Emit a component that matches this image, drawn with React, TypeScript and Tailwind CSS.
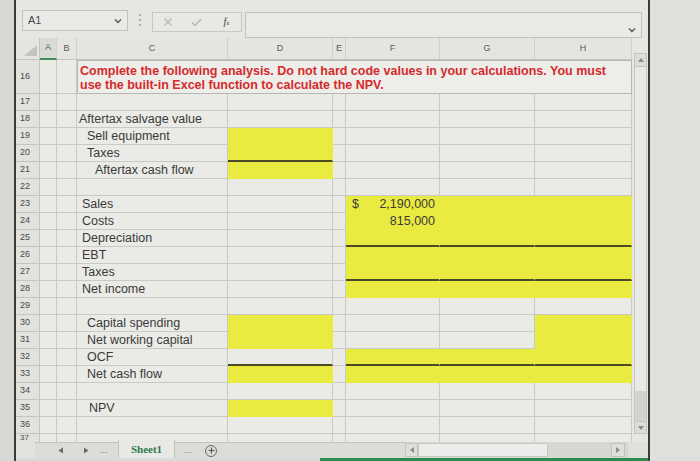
import React from "react";

type Col = { k: string; w: string };
const cols: Col[] = [
  { k: "A", w: "w-[17px]" },
  { k: "B", w: "w-[20px]" },
  { k: "C", w: "w-[151px]" },
  { k: "D", w: "w-[105px]" },
  { k: "E", w: "w-[13px]" },
  { k: "F", w: "w-[94px]" },
  { k: "G", w: "w-[95px]" },
  { k: "H", w: "w-[97px]" },
];

const yellowMap: Record<string, number[]> = {
  D: [19, 20, 21, 30, 31, 33, 35],
  F: [23, 24, 25, 26, 27, 28, 32, 33],
  G: [23, 24, 25, 26, 27, 28, 32, 33],
  H: [23, 24, 25, 26, 27, 28, 30, 31, 32, 33],
};
const darkMap: Record<string, number[]> = {
  D: [20, 32],
  F: [25, 27, 32],
  G: [25, 27, 32],
  H: [25, 27, 32],
};

const labels: Record<number, [string, string]> = {
  18: ["Aftertax salvage value", "pl-[2px]"],
  19: ["Sell equipment", "pl-[10px]"],
  20: ["Taxes", "pl-[10px]"],
  21: ["Aftertax cash flow", "pl-[18px]"],
  23: ["Sales", "pl-[5px]"],
  24: ["Costs", "pl-[5px]"],
  25: ["Depreciation", "pl-[5px]"],
  26: ["EBT", "pl-[5px]"],
  27: ["Taxes", "pl-[5px]"],
  28: ["Net income", "pl-[5px]"],
  30: ["Capital spending", "pl-[10px]"],
  31: ["Net working capital", "pl-[10px]"],
  32: ["OCF", "pl-[10px]"],
  33: ["Net cash flow", "pl-[10px]"],
  35: ["NPV", "pl-[12px]"],
};

function Cell({ row, col }: { row: number; col: Col }) {
  const isY = (yellowMap[col.k] || []).includes(row);
  const isD = (darkMap[col.k] || []).includes(row);
  const bg = isY ? "bg-[#e9eb41] border-r-[#e9eb41]" : "bg-[#eaeae7] border-r-[#c9c9c5]";
  const bottom = isD
    ? "border-b-2 border-b-[#4a4a26]"
    : isY
    ? "border-b border-b-[#e9eb41]"
    : "border-b border-b-[#c9c9c5]";
  let content: React.ReactNode = null;
  if (col.k === "C" && labels[row]) {
    content = <span className={`${labels[row][1]} text-[12.5px] text-[#3a3a38]`}>{labels[row][0]}</span>;
  }
  if (col.k === "F" && row === 23) {
    content = (
      <div className="flex w-full justify-between pl-[6px] pr-[4px] text-[12.5px] text-[#3a3a38]">
        <span>$</span>
        <span>2,190,000</span>
      </div>
    );
  }
  if (col.k === "F" && row === 24) {
    content = (
      <div className="flex w-full justify-end pr-[4px] text-[12.5px] text-[#3a3a38]">
        <span>815,000</span>
      </div>
    );
  }
  return (
    <div className={`${col.w} h-full shrink-0 border-r ${bg} ${bottom} flex items-center whitespace-nowrap`}>
      {content}
    </div>
  );
}

function RowHead({ n }: { n: number }) {
  return (
    <div className="w-[24px] h-full shrink-0 bg-[#e2e2de] border-r border-b border-[#c4c4c0] flex items-center pl-[4px] text-[9px] text-[#4a4a48]">
      {n}
    </div>
  );
}

function GridRow({ n, h }: { n: number; h: string }) {
  return (
    <div className={`flex ${h}`}>
      <RowHead n={n} />
      {cols.map((c) => (
        <Cell key={c.k} row={n} col={c} />
      ))}
    </div>
  );
}

export default function App() {
  const rows: number[] = [];
  for (let i = 17; i <= 36; i++) rows.push(i);
  return (
    <div className="w-[700px] h-[461px] overflow-hidden flex bg-[#dcdcd8] font-['Liberation_Sans',Arial,sans-serif]">
      <div className="w-[14px] shrink-0 bg-[#d7d7d3]" />
      <div className="w-[636px] shrink-0 h-full border-l-2 border-r-2 border-[#3a3a38] bg-[#e6e6e2] flex flex-col">
        {/* formula bar */}
        <div className="h-[38px] shrink-0 flex items-start">
          <div className="ml-[6px] mt-[10px] w-[106px] h-[21px] border border-[#c2c2be] bg-[#e9e9e5] flex items-center justify-between pl-[5px] pr-[5px]">
            <span className="text-[11px] text-[#4a4a48]">A1</span>
            <svg width="8" height="6" viewBox="0 0 8 6">
              <path d="M1 1.5 L4 4.5 L7 1.5" fill="none" stroke="#555" strokeWidth="1.4" />
            </svg>
          </div>
          <div className="ml-[10px] mt-[14px] w-[4px] flex flex-col items-center gap-[3px]">
            <div className="w-[2px] h-[2px] bg-[#9a9a96] rounded-full" />
            <div className="w-[2px] h-[2px] bg-[#9a9a96] rounded-full" />
            <div className="w-[2px] h-[2px] bg-[#9a9a96] rounded-full" />
          </div>
          <div className="ml-[10px] mt-[12px] w-[90px] h-[20px] border border-[#c8c8c4] bg-[#e8e8e4] grid grid-cols-3 items-center justify-items-center">
            <svg width="10" height="10" viewBox="0 0 10 10">
              <path d="M1.5 1.5 L8.5 8.5 M8.5 1.5 L1.5 8.5" stroke="#b4b4b0" strokeWidth="1.2" />
            </svg>
            <svg width="11" height="9" viewBox="0 0 11 9">
              <path d="M1 4.5 L4 7.5 L10 1" fill="none" stroke="#b4b4b0" strokeWidth="1.4" />
            </svg>
            <span className="font-['Liberation_Serif',serif] italic text-[10px] text-[#3a3a38] leading-none">
              f<span className="text-[7px]">x</span>
            </span>
          </div>
          <div className="ml-[3px] mt-[12px] w-[397px] h-[26px] border border-[#c2c2be] bg-[#e9e9e5] flex items-end justify-end pr-[5px] pb-[4px]">
            <svg width="8" height="6" viewBox="0 0 8 6">
              <path d="M1 1.5 L4 4.5 L7 1.5" fill="none" stroke="#555" strokeWidth="1.4" />
            </svg>
          </div>
        </div>

        {/* grid + scrollbar */}
        <div className="h-[404px] shrink-0 flex">
          <div className="w-[616px] shrink-0 flex flex-col">
            {/* header */}
            <div className="flex h-[22px] bg-[#e4e4e0]">
              <div className="w-[24px] shrink-0 h-full border-r border-b border-[#c4c4c0] flex items-end justify-end pr-[2px] pb-[3px]">
                <svg width="13" height="11" viewBox="0 0 13 11">
                  <path d="M13 0 L13 11 L0 11 Z" fill="#c2c2be" />
                </svg>
              </div>
              {cols.map((c) => (
                <div
                  key={c.k}
                  className={`${c.w} shrink-0 h-full border-r border-[#d0d0cc] flex items-center justify-center text-[9px] ${
                    c.k === "A"
                      ? "text-[#2f7a4a] border-b-2 border-b-[#3f8a57] bg-[#dadad6]"
                      : "text-[#5a5a58] border-b border-b-[#c4c4c0]"
                  }`}
                >
                  {c.k}
                </div>
              ))}
            </div>
            {/* row 16 */}
            <div className="flex h-[34px]">
              <RowHead n={16} />
              <div className="w-[17px] shrink-0 h-full border-r border-b border-[#c9c9c5] bg-[#eaeae7]" />
              <div className="w-[20px] shrink-0 h-full border-r border-b border-[#c9c9c5] bg-[#eaeae7]" />
              <div className="w-[555px] shrink-0 h-full border border-[#b6b6b2] bg-[#ededea] pl-[2px] pt-[3px] text-[12.5px] font-bold text-[#d42a2c] leading-[14px] whitespace-nowrap">
                Complete the following analysis. Do not hard code values in your calculations. You must
                <br />
                use the built-in Excel function to calculate the NPV.
              </div>
            </div>
            {rows.map((n) => (
              <GridRow key={n} n={n} h="h-[17px]" />
            ))}
            <div className="flex h-[8px] overflow-hidden">
              <div className="w-[24px] shrink-0 h-full bg-[#e2e2de] border-r border-[#c4c4c0] pl-[4px] text-[8px] text-[#4a4a48] leading-[8px]">
                37
              </div>
              {cols.map((c) => (
                <div key={c.k} className={`${c.w} shrink-0 h-full border-r border-[#c9c9c5] bg-[#eaeae7]`} />
              ))}
            </div>
          </div>
          {/* vertical scrollbar */}
          <div className="w-[16px] shrink-0 pl-[2px] pr-[1px] pt-[15px] pb-[8px] flex flex-col">
            <div className="h-[14px] shrink-0 bg-[#dcdcd8] border border-[#c4c4c0] flex items-center justify-center">
              <svg width="6" height="4" viewBox="0 0 6 4">
                <path d="M0 4 L3 0 L6 4 Z" fill="#8a8a86" />
              </svg>
            </div>
            <div className="flex-1 bg-[#e8e8e5] border-x border-[#c8c8c4]" />
            <div className="h-[30px] shrink-0 bg-[#d2d2ce] border-x border-[#c4c4c0]" />
            <div className="h-[13px] shrink-0 bg-[#dcdcd8] border border-[#c4c4c0] flex items-center justify-center">
              <svg width="6" height="4" viewBox="0 0 6 4">
                <path d="M0 0 L3 4 L6 0 Z" fill="#8a8a86" />
              </svg>
            </div>
          </div>
        </div>

        {/* bottom bar */}
        <div className="h-[19px] shrink-0 flex flex-col bg-[#dadad6]">
          <div className="h-[16px] flex">
            <div className="w-[19px] shrink-0 bg-[#e2e2de]" />
            <div className="w-[370px] shrink-0 border-t border-[#c2c2be] bg-[#dcdcd8] flex items-center pl-[22px]">
              <svg width="8" height="7" viewBox="0 0 8 7" className="shrink-0">
                <path d="M6 0.5 L1.5 3.5 L6 6.5 Z" fill="#6a6a68" />
              </svg>
              <svg width="8" height="7" viewBox="0 0 8 7" className="ml-[17px] shrink-0">
                <path d="M2 0.5 L6.5 3.5 L2 6.5 Z" fill="#6a6a68" />
              </svg>
              <span className="ml-[10px] w-[12px] text-[9px] text-[#777] leading-none">...</span>
              <div className="ml-[6px] w-[57px] h-[18px] -mt-[3px] bg-[#e8e8e5] border-x border-[#c2c2be] flex items-center justify-center font-['Liberation_Serif',serif] font-bold text-[11px] text-[#2f7a4a]">
                Sheet1
              </div>
              <span className="ml-[9px] w-[12px] text-[9px] text-[#777] leading-none">...</span>
              <div className="ml-[9px] w-[12px] h-[12px] rounded-full border border-[#6a6a68] flex items-center justify-center">
                <svg width="7" height="7" viewBox="0 0 7 7">
                  <path d="M3.5 0.5 V6.5 M0.5 3.5 H6.5" stroke="#555" strokeWidth="1.2" />
                </svg>
              </div>
            </div>
            <div className="w-[223px] shrink-0 bg-[#d6d6d2] flex items-center">
              <div className="w-[13px] h-[14px] bg-[#dededa] border border-[#c4c4c0] flex items-center justify-center">
                <svg width="4" height="6" viewBox="0 0 4 6">
                  <path d="M4 0 L0 3 L4 6 Z" fill="#8a8a86" />
                </svg>
              </div>
              <div className="w-[130px] h-[14px] bg-[#ececea] border border-[#c8c8c4]" />
              <div className="flex-1" />
              <div className="w-[14px] h-[14px] mr-[3px] bg-[#dededa] border border-[#c4c4c0] flex items-center justify-center">
                <svg width="4" height="6" viewBox="0 0 4 6">
                  <path d="M0 0 L4 3 L0 6 Z" fill="#8a8a86" />
                </svg>
              </div>
            </div>
            <div className="flex-1 bg-[#e0e0dc]" />
          </div>
          <div className="h-[3px] flex">
            <div className="w-[304px] shrink-0" />
            <div className="flex-1 bg-[#2f8a4f]" />
          </div>
        </div>
      </div>
      <div className="flex-1 bg-[#dfdfdb]" />
    </div>
  );
}
